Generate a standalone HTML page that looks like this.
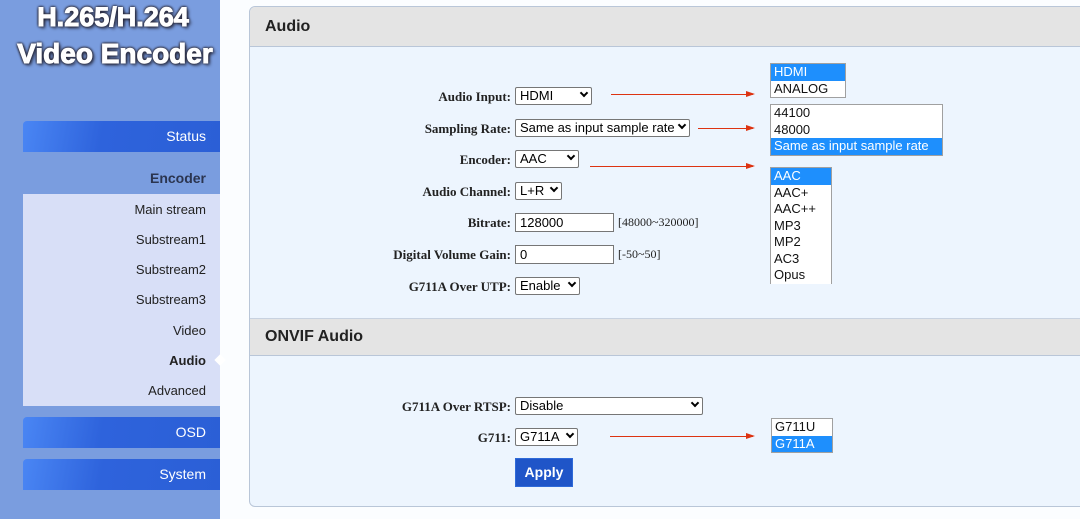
<!DOCTYPE html>
<html><head><meta charset="utf-8"><style>
*{margin:0;padding:0;box-sizing:border-box}
body{width:1080px;height:519px;overflow:hidden;background:#fbfdff;font-family:"Liberation Sans",sans-serif;position:relative}
.a{position:absolute}
#side{left:0;top:0;width:220px;height:519px;background:#7a9ddf}
.logo{left:0;width:230px;text-align:center;color:#fff;font:bold 27px "Liberation Sans",sans-serif;text-shadow:2px 2px 3px #223,-1px -1px 2px #334,1px -1px 2px #334,-1px 1px 2px #334;-webkit-text-stroke:1px #fff}
.btn{left:23px;width:197px;height:31px;background:linear-gradient(100deg,#4a86f4,#2e63dc 40%,#2b5fd6);border-radius:4px 0 0 0;color:#fff;font-size:14px;text-align:right;padding-right:14px;line-height:31px}
.sub{left:23px;top:194px;width:197px;height:212px;background:#d8dff7}
.si{right:14px;font-size:13px;color:#222;text-align:right;position:absolute}
.lab{position:absolute;right:569px;font:bold 13px "Liberation Serif",serif;color:#222;text-align:right}
.sel{position:absolute;left:515px;height:18px;border:1px solid #767676;border-radius:2px;background:#fff;font-size:13px;line-height:16px;padding-left:4px;color:#000}
.sel i{position:absolute;right:4px;width:6px;height:6px;border-right:2px solid #000;border-bottom:2px solid #000;transform:rotate(45deg);top:2px}
.inp{position:absolute;left:515px;width:99px;height:19px;border:1px solid #767676;background:#fff;font-size:13px;line-height:17px;padding-left:4px}
.note{position:absolute;left:618px;font:12px "Liberation Serif",serif;color:#222}
.list{position:absolute;background:#fff;border:1px solid #a0a0a0;font-size:13px;line-height:16.5px;color:#111}
.list div{padding-left:3px}
.list .h{background:#1e8ffd;color:#fff}
.arr{position:absolute;height:1px;background:#d31}
.arr:after{content:"";position:absolute;right:-2px;top:-3px;border-left:9px solid #d31;border-top:3.5px solid transparent;border-bottom:3.5px solid transparent}
</style></head><body>
<div id="side" class="a"></div>
<div class="a logo" style="top:2px;left:-2px">H.265/H.264</div>
<div class="a logo" style="top:38px;left:0px;font-size:28px">Video Encoder</div>
<div class="a btn" style="top:121px">Status</div>
<div class="a" style="left:23px;width:183px;top:170px;text-align:right;font-weight:bold;font-size:14px;color:#2b3550">Encoder</div>
<div class="a sub">
<div class="si" style="top:8px">Main stream</div>
<div class="si" style="top:38px">Substream1</div>
<div class="si" style="top:68px">Substream2</div>
<div class="si" style="top:98px">Substream3</div>
<div class="si" style="top:129px">Video</div>
<div class="si" style="top:159px;font-weight:bold">Audio</div>
<div class="si" style="top:189px">Advanced</div>
</div>
<div class="a" style="left:216px;top:356px;width:8px;height:8px;background:#fff;transform:rotate(45deg)"></div>
<div class="a btn" style="top:417px">OSD</div>
<div class="a btn" style="top:459px">System</div>

<div class="a" style="left:249px;top:6px;width:840px;height:501px;border:1px solid #b9c6d8;border-radius:6px;background:#edf5fe;overflow:hidden">
<div class="a" style="left:0;top:0;width:100%;height:40px;background:#e4e4e4;border-bottom:1px solid #b9c6d8"></div>
<div class="a" style="left:15px;top:11px;font-weight:bold;font-size:16px;color:#222">Audio</div>
<div class="a" style="left:0;top:311px;width:100%;height:38px;background:#e4e4e4;border-top:1px solid #c8d2e0;border-bottom:1px solid #b9c6d8"></div>
<div class="a" style="left:15px;top:321px;font-weight:bold;font-size:16px;color:#222">ONVIF Audio</div>
</div>

<div class="lab" style="top:89px">Audio Input:</div>
<div class="sel" style="top:87px;width:77px">HDMI<i></i></div>
<div class="lab" style="top:121px">Sampling Rate:</div>
<div class="sel" style="top:119px;width:175px">Same as input sample rate<i></i></div>
<div class="lab" style="top:152px">Encoder:</div>
<div class="sel" style="top:150px;width:64px">AAC<i></i></div>
<div class="lab" style="top:184px">Audio Channel:</div>
<div class="sel" style="top:182px;width:47px">L+R<i></i></div>
<div class="lab" style="top:215px">Bitrate:</div>
<div class="inp" style="top:213px">128000</div><div class="note" style="top:215px">[48000~320000]</div>
<div class="lab" style="top:247px">Digital Volume Gain:</div>
<div class="inp" style="top:245px">0</div><div class="note" style="top:247px">[-50~50]</div>
<div class="lab" style="top:279px">G711A Over UTP:</div>
<div class="sel" style="top:277px;width:65px">Enable<i></i></div>
<div class="lab" style="top:399px">G711A Over RTSP:</div>
<div class="sel" style="top:397px;width:188px">Disable<i></i></div>
<div class="lab" style="top:430px">G711:</div>
<div class="sel" style="top:428px;width:63px">G711A<i></i></div>
<div class="a" style="left:515px;top:458px;width:58px;height:29px;background:#1f55c8;border:1px solid #2f6ad8;color:#fff;font-weight:bold;font-size:14px;text-align:center;line-height:27px">Apply</div>

<div class="arr" style="left:611px;top:94px;width:142px"></div>
<div class="arr" style="left:698px;top:128px;width:55px"></div>
<div class="arr" style="left:590px;top:166px;width:163px"></div>
<div class="arr" style="left:610px;top:436px;width:143px"></div>

<div class="list" style="left:770px;top:63px;width:76px"><div class="h">HDMI</div><div>ANALOG</div></div>
<div class="list" style="left:770px;top:104px;width:173px"><div>44100</div><div>48000</div><div class="h">Same as input sample rate</div></div>
<div class="list" style="left:770px;top:167px;width:62px;border-bottom:none"><div class="h">AAC</div><div>AAC+</div><div>AAC++</div><div>MP3</div><div>MP2</div><div>AC3</div><div>Opus</div></div>
<div class="list" style="left:771px;top:418px;width:62px"><div>G711U</div><div class="h">G711A</div></div>
</body></html>
